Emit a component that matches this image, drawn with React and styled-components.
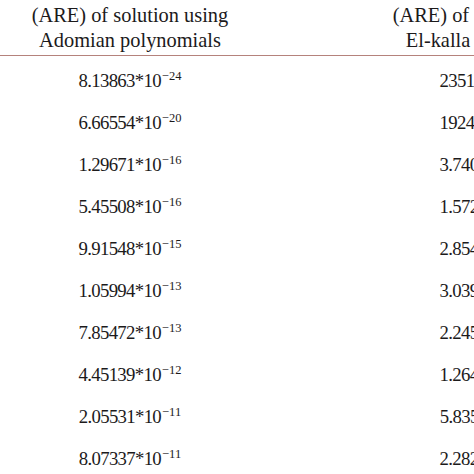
import React from "react";
import styled, { createGlobalStyle } from "styled-components";

const Global = createGlobalStyle`
  html, body {
    margin: 0;
    padding: 0;
    background: #ffffff;
    overflow: hidden;
  }
  body {
    width: 474px;
    height: 474px;
    font-family: "Liberation Serif", "Times New Roman", serif;
    color: #1c1a1b;
  }
`;

const Table = styled.div`
  width: 474px;
  height: 474px;
  overflow: hidden;
`;

const Head = styled.div`
  display: grid;
  grid-template-columns: 260px 462px;
  padding: 3px 0 2px;
  border-bottom: 1px solid #b5827c;
  width: 722px;
`;

const HeadCell = styled.div`
  text-align: center;
  font-size: 20.4px;
  line-height: 25px;
  white-space: nowrap;
`;

const Body = styled.div`
  padding-top: 4px;
`;

const Row = styled.div`
  display: grid;
  grid-template-columns: 260px 462px;
  height: 42px;
  align-items: center;
  width: 722px;
`;

const Cell = styled.div`
  text-align: center;
  font-size: 18.8px;
  letter-spacing: -0.7px;
  white-space: nowrap;
  line-height: 42px;
`;

const Sup = styled.sup`
  font-size: 12.5px;
  letter-spacing: 0;
  vertical-align: 7px;
  line-height: 0;
  margin-left: 1px;
`;

const rows = [
  ["8.13863", "24", "2351.64", "24"],
  ["6.66554", "20", "1924.73", "20"],
  ["1.29671", "16", "3.74012", "16"],
  ["5.45508", "16", "1.57289", "16"],
  ["9.91548", "15", "2.85417", "15"],
  ["1.05994", "13", "3.03926", "13"],
  ["7.85472", "13", "2.24531", "13"],
  ["4.45139", "12", "1.26478", "12"],
  ["2.05531", "11", "5.83524", "11"],
  ["8.07337", "11", "2.28216", "10"],
];

function Value({ m, e }) {
  return (
    <Cell>
      {m}*10<Sup>−{e}</Sup>
    </Cell>
  );
}

export default function App() {
  return (
    <Table>
      <Global />
      <Head>
        <HeadCell>
          (ARE) of solution using
          <br />
          Adomian polynomials
        </HeadCell>
        <HeadCell>
          (ARE) of solution using
          <br />
          El-kalla polynomials
        </HeadCell>
      </Head>
      <Body>
        {rows.map((r, i) => (
          <Row key={i}>
            <Value m={r[0]} e={r[1]} />
            <Value m={r[2]} e={r[3]} />
          </Row>
        ))}
      </Body>
    </Table>
  );
}
